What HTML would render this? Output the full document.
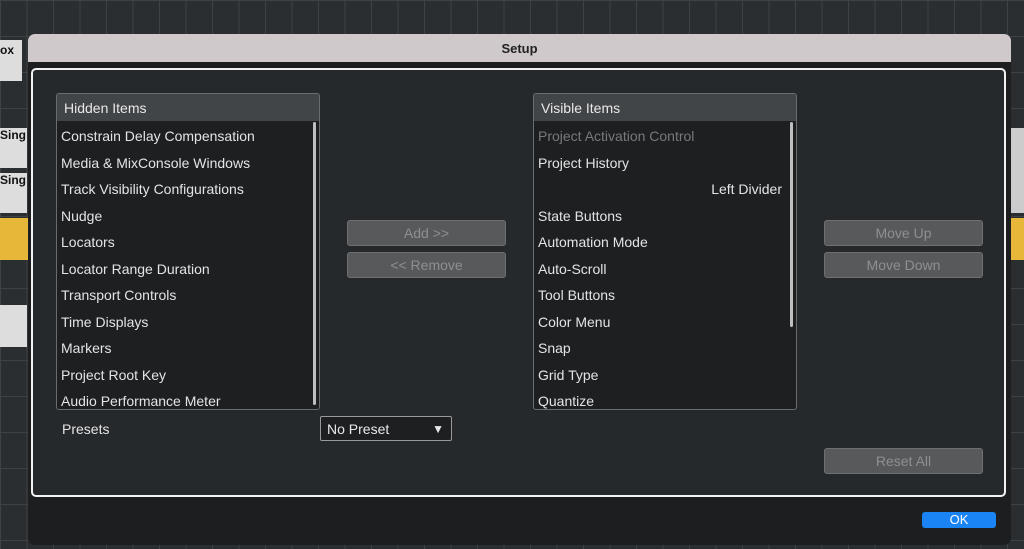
<!DOCTYPE html><html><head><style>
body{margin:0;width:1024px;height:549px;overflow:hidden;background:#2b2e31;font-family:"Liberation Sans",sans-serif;position:relative}
.grid{position:absolute;inset:0;background-image:linear-gradient(90deg,#3e4245 1px,transparent 1px),linear-gradient(#3e4245 1px,transparent 1px);background-size:26.5px 100%,100% 36px}
.dlg{position:absolute;left:28px;top:34px;width:983px;height:511px;background:#1c1e20;border-radius:7px;overflow:hidden}
.title{height:28px;background:#cfc9cc;text-align:center;font:bold 13px/29px "Liberation Sans",sans-serif;color:#222}
.panel{position:absolute;left:3px;top:34px;width:971px;height:425px;border:2px solid #f2f2f2;border-radius:5px;background:#26292c}
.list{position:absolute;top:23px;width:262px;height:315px;border:1px solid #6a6d70;border-radius:3px;background:#1d1f21;overflow:hidden}
.hd{height:27px;background:#424548;color:#e8e8e8;font-size:14px;line-height:28px;padding-left:7px;margin-bottom:2px}
.it{height:26.5px;line-height:26.5px;color:#e4e4e4;font-size:14px;padding-left:4px}
.sb{position:absolute;right:3px;top:28px;width:3px;height:283px;background:#bfbfbf;border-radius:2px}
.btn{position:absolute;width:157px;height:24px;background:#58595b;border:1px solid #6e6f71;border-radius:3px;color:#8e8f91;font-size:14px;text-align:center;line-height:24px}
</style></head><body><div class="grid"></div>
<div style="position:absolute;left:0;top:40px;width:22px;height:38px;background:#ddd;font:bold 12px sans-serif;color:#111;padding-top:3px">ox</div>
<div style="position:absolute;left:0;top:128px;width:27px;height:40px;background:#ddd;font:bold 12px sans-serif;color:#111">Sing</div>
<div style="position:absolute;left:0;top:173px;width:27px;height:40px;background:#ddd;font:bold 12px sans-serif;color:#111">Sing</div>
<div style="position:absolute;left:0;top:218px;width:28px;height:42px;background:#e7b73a"></div>
<div style="position:absolute;left:1008px;top:218px;width:16px;height:42px;background:#e7b73a"></div>
<div style="position:absolute;left:1010px;top:128px;width:14px;height:85px;background:#ccc"></div>
<div style="position:absolute;left:0;top:305px;width:27px;height:42px;background:#ddd"></div>
<div class="dlg"><div class="title">Setup</div>
<div class="panel">
<div class="list" style="left:23px"><div class="hd">Hidden Items</div>
<div class="it">Constrain Delay Compensation</div><div class="it">Media &amp; MixConsole Windows</div><div class="it">Track Visibility Configurations</div><div class="it">Nudge</div><div class="it">Locators</div><div class="it">Locator Range Duration</div><div class="it">Transport Controls</div><div class="it">Time Displays</div><div class="it">Markers</div><div class="it">Project Root Key</div><div class="it">Audio Performance Meter</div><div class="sb"></div></div>
<div class="list" style="left:500px"><div class="hd">Visible Items</div>
<div class="it" style="color:#77797b">Project Activation Control</div><div class="it">Project History</div><div class="it" style="text-align:right;padding-right:14px">Left Divider</div><div class="it">State Buttons</div><div class="it">Automation Mode</div><div class="it">Auto-Scroll</div><div class="it">Tool Buttons</div><div class="it">Color Menu</div><div class="it">Snap</div><div class="it">Grid Type</div><div class="it">Quantize</div><div class="sb" style="height:205px"></div></div>
<div class="btn" style="left:314px;top:150px">Add &gt;&gt;</div>
<div class="btn" style="left:314px;top:182px">&lt;&lt; Remove</div>
<div class="btn" style="left:791px;top:150px">Move Up</div>
<div class="btn" style="left:791px;top:182px">Move Down</div>
<div class="btn" style="left:791px;top:378px">Reset All</div>
<div style="position:absolute;left:29px;top:351px;color:#e4e4e4;font-size:14px">Presets</div>
<div style="position:absolute;left:287px;top:346px;width:124px;height:23px;background:#1d1f21;border:1px solid #9a9a9a;border-radius:2px;color:#e8e8e8;font-size:14px;line-height:24px;padding-left:6px">No Preset<span style="position:absolute;right:7px;font-size:12px">▼</span></div>
</div>
<div style="position:absolute;left:894px;top:478px;width:74px;height:16px;background:#1a84f5;border-radius:3px;color:#fff;font-size:13px;text-align:center;line-height:16px">OK</div>
</div></body></html>
